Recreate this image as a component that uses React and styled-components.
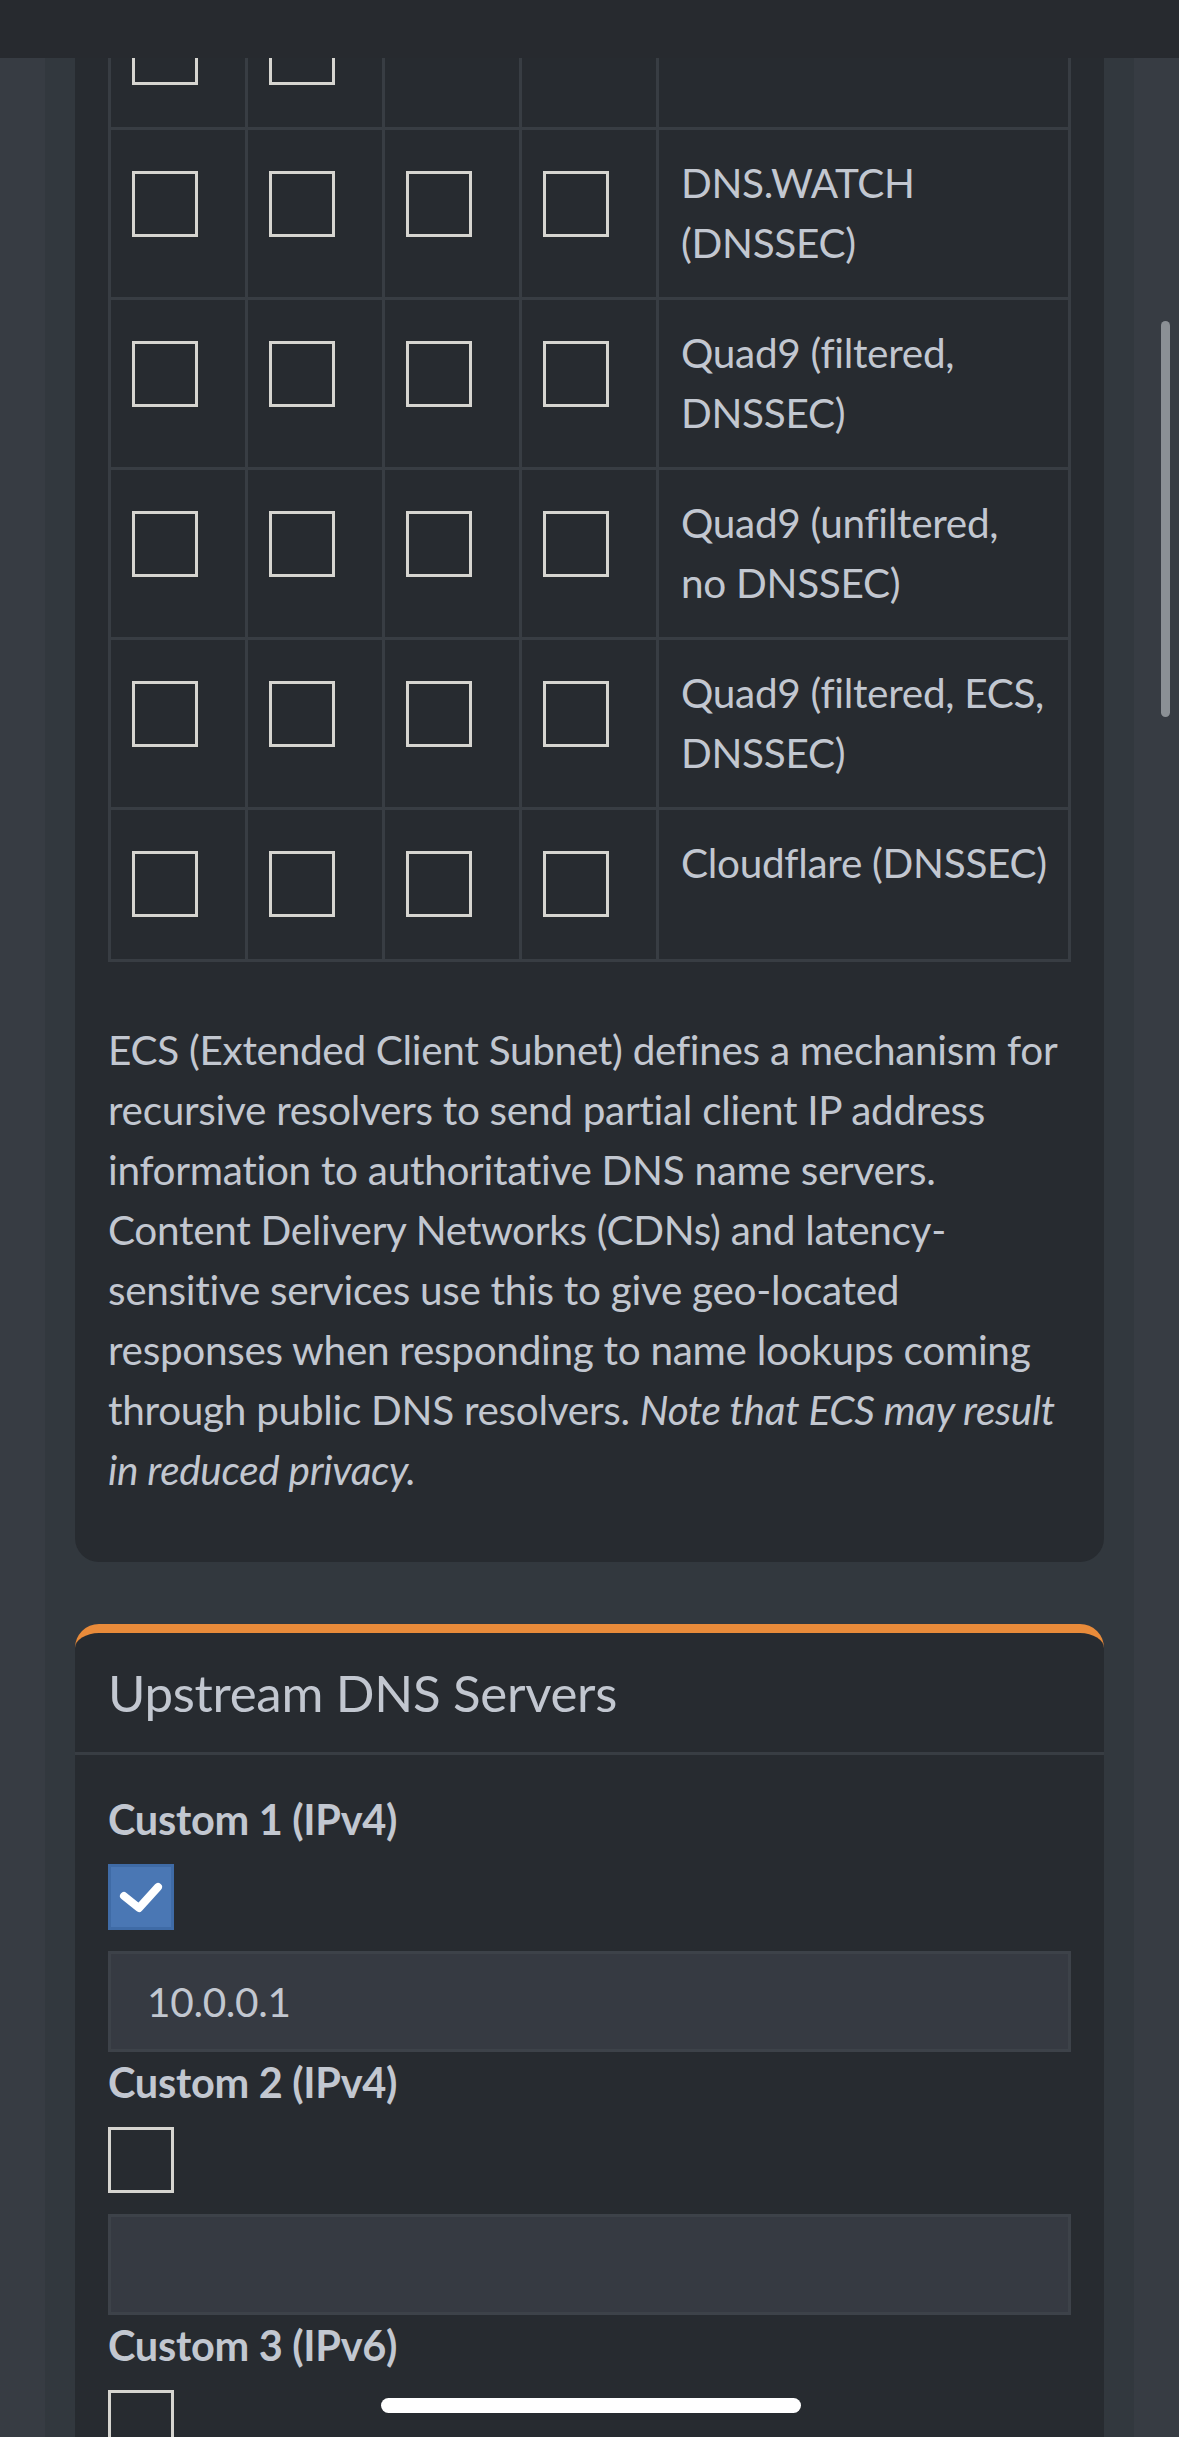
import React from 'react';
import styled, { createGlobalStyle } from 'styled-components';

const GlobalStyle = createGlobalStyle`
  html, body {
    margin: 0;
    padding: 0;
    background: #373c43;
    overflow: hidden;
  }
  body {
    font-family: Lato, "Open Sans", sans-serif;
    font-size: 40.5px;
    letter-spacing: -0.3px;
    line-height: 60px;
    color: #c2c7d0;
  }
  * {
    box-sizing: border-box;
  }
`;

// data
const servers = [
  { name: 'Comodo', v4: 2, v6: 0 },
  { name: 'DNS.WATCH (DNSSEC)', v4: 2, v6: 2 },
  { name: 'Quad9 (filtered, DNSSEC)', v4: 2, v6: 2 },
  { name: 'Quad9 (unfiltered, no\u00a0DNSSEC)', v4: 2, v6: 2 },
  { name: 'Quad9 (filtered, ECS, DNSSEC)', v4: 2, v6: 2 },
  { name: 'Cloudflare (DNSSEC)', v4: 2, v6: 2 },
];

const customs = [
  { label: 'Custom 1 (IPv4)', checked: true, value: '10.0.0.1' },
  { label: 'Custom 2 (IPv4)', checked: false, value: '' },
  { label: 'Custom 3 (IPv6)', checked: false, value: '' },
];

const Check = ({ checked }) => (
  <Box $checked={checked}>
    {checked && (
      <svg viewBox="0 0 60 60" width="60" height="60">
        <polyline
          points="13,29 28,41 47,20"
          fill="none"
          stroke="#fff"
          strokeWidth="8"
          strokeLinecap="round"
          strokeLinejoin="round"
        />
      </svg>
    )}
  </Box>
);

const App = () => {
  return (
    <>
      <GlobalStyle />
      <TopBar />
      <Content>
        {/* public resolvers */}
        <Card>
          <Table>
            <colgroup>
              <col width="137" />
              <col width="137" />
              <col width="137" />
              <col width="137" />
              <col />
            </colgroup>
            <tbody>
              {servers.map((s) => (
                <tr key={s.name}>
                  {[0, 1, 2, 3].map((i) => (
                    <BoxCell key={i}>
                      {(i < 2 ? i < s.v4 : i - 2 < s.v6) && <Check />}
                    </BoxCell>
                  ))}
                  <NameCell>{s.name}</NameCell>
                </tr>
              ))}
            </tbody>
          </Table>
          <Note>
            ECS (Extended Client Subnet) defines a mechanism for recursive resolvers to send
            partial client IP address information to authoritative DNS name servers. Content
            Delivery Networks (CDNs) and latency-sensitive services use this to give geo-located
            responses when responding to name lookups coming through public DNS resolvers.{' '}
            <em>Note that ECS may result in reduced privacy.</em>
          </Note>
        </Card>

        {/* custom upstreams */}
        <Card $accent>
          <CardHeader>
            <Title>Upstream DNS Servers</Title>
          </CardHeader>
          <CardBody>
            {customs.map((c) => (
              <Field key={c.label}>
                <Label>{c.label}</Label>
                <Check checked={c.checked} />
                <Input>{c.value}</Input>
              </Field>
            ))}
          </CardBody>
        </Card>
      </Content>
      <ScrollThumb />
      <HomeBar />
    </>
  );
};

const TopBar = styled.div`
  position: fixed;
  top: 0;
  left: 0;
  right: 0;
  height: 58px;
  background: #272a2f;
  z-index: 10;
`;

const Content = styled.main`
  margin: -55px 45px 0;
  padding: 0 30px;
  min-height: 2600px;
  background: #32383e;
`;

const Card = styled.section`
  background: #272b30;
  border-radius: 24px;
  border-top: ${(p) => (p.$accent ? '9px solid #e98b3a' : 'none')};
  padding: ${(p) => (p.$accent ? '0' : '30px 33px')};
  margin-bottom: 62px;
`;

const Table = styled.table`
  width: 100%;
  border-collapse: collapse;
  table-layout: fixed;
  margin-bottom: 58px;

  td {
    border: 3px solid #383d43;
    vertical-align: top;
    padding: 23px 24px 24px;
  }
`;

const BoxCell = styled.td`
  && {
    padding: 23px 21px 24px;
  }

  & > div {
    margin: 18px 0;
  }
`;

const NameCell = styled.td`
  && {
    padding: 23px 10px 24px 22px;
  }
`;

const Note = styled.p`
  margin: 0 0 32px;

  em {
    font-style: italic;
  }
`;

const Box = styled.div`
  width: 66px;
  height: 66px;
  border: 3px solid ${(p) => (p.$checked ? '#3f6ba6' : '#d6d5d0')};
  background: ${(p) => (p.$checked ? '#4a77b4' : 'transparent')};
  display: flex;
  align-items: center;
  justify-content: center;
`;

const CardHeader = styled.header`
  padding: 30px 33px;
  border-bottom: 3px solid #383d43;
`;

const Title = styled.h3`
  margin: 0;
  font-size: 51px;
  letter-spacing: -0.3px;
  line-height: 59px;
  font-weight: 400;
`;

const CardBody = styled.div`
  padding: 34px 33px 0;
`;

const Field = styled.div`
  & > div:nth-of-type(1) {
    margin: 4px 0 21px;
  }
`;

const Label = styled.label`
  display: block;
  font-size: 41.5px;
  font-weight: 700;
  margin-bottom: 15px;
`;

const Input = styled.div`
  height: 101px;
  background: #363a42;
  border: 3px solid #3d4249;
  padding: 0 36px;
  display: flex;
  align-items: center;
  color: #c2c7d0;
`;

const ScrollThumb = styled.div`
  position: fixed;
  top: 321px;
  right: 9px;
  width: 9px;
  height: 396px;
  border-radius: 5px;
  background: #8b9095;
  z-index: 11;
`;

const HomeBar = styled.div`
  position: fixed;
  bottom: 24px;
  left: 381px;
  width: 420px;
  height: 15px;
  border-radius: 8px;
  background: #ffffff;
  z-index: 11;
`;

export default App;
